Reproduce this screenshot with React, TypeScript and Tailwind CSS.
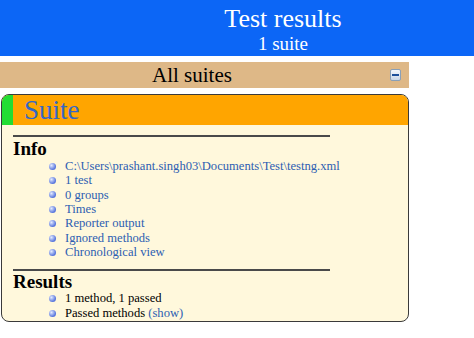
import React from "react"

const infoItems = [
  "C:\\Users\\prashant.singh03\\Documents\\Test\\testng.xml",
  "1 test",
  "0 groups",
  "Times",
  "Reporter output",
  "Ignored methods",
  "Chronological view",
]

function Bullet() {
  return (
    <span className="inline-block w-[7px] h-[7px] rounded-full bg-[radial-gradient(circle_at_35%_35%,#e4ebff,#5472dc_70%)] shrink-0" />
  )
}

function Item({ children }: { children: React.ReactNode }) {
  return (
    <li className="flex items-center gap-[9px] h-[14.4px]">
      <Bullet />
      <span>{children}</span>
    </li>
  )
}

export default function App() {
  return (
    <div className="w-[474px] h-[338px] bg-white font-['Liberation_Serif',serif] overflow-hidden">
      <header className="h-[56px] bg-[#0c66f6] text-white text-center pl-[92px] pt-[4px]">
        <div className="text-[26px] leading-[30px]">Test results</div>
        <div className="text-[19px] leading-[20px]">1 suite</div>
      </header>

      <div className="w-[409px] mt-[6px] h-[26px] bg-[#deb887] flex items-center relative">
        <div className="flex-1 text-center text-[21px] leading-[26px] text-black pr-[25px]">All suites</div>
        <div className="absolute right-[8px] top-[7px] w-[11px] h-[12px] rounded-[2px] border border-[#8aa0b8] bg-[linear-gradient(#f4f7fb,#c9d6e6)] flex items-center justify-center">
          <span className="block w-[7px] h-[2px] bg-[#1d4f9a]" />
        </div>
      </div>

      <div className="ml-[1px] mt-[6px] w-[408px] h-[228px] border border-[#3a3a3a] rounded-[8px] overflow-hidden bg-[#fff8dc]">
        <div className="h-[30px] bg-[#ffa500] flex">
          <div className="w-[11px] bg-[#22dd33]" />
          <div className="pl-[11px] text-[27px] leading-[30px] text-[#3567c4]">Suite</div>
        </div>

        <div className="pl-[11px] pt-[10px] text-[12.6px] text-[#2d5eb2]">
          <div className="w-[317px] h-[2px] bg-[#4a4a4a]" />
          <h2 className="text-[19px] font-bold leading-[20px] mt-[2px] text-black">Info</h2>
          <ul className="pl-[36px]">
            {infoItems.map((t) => (
              <Item key={t}>{t}</Item>
            ))}
          </ul>

          <div className="w-[317px] h-[2px] bg-[#4a4a4a] mt-[9px]" />
          <h2 className="text-[19px] font-bold leading-[20px] mt-[1px] text-black">Results</h2>
          <ul className="pl-[36px]">
            <Item>
              <span className="text-black">1 method, 1 passed</span>
            </Item>
            <Item>
              <span className="text-black">Passed methods </span>
              <span>(show)</span>
            </Item>
          </ul>
        </div>
      </div>
    </div>
  )
}
